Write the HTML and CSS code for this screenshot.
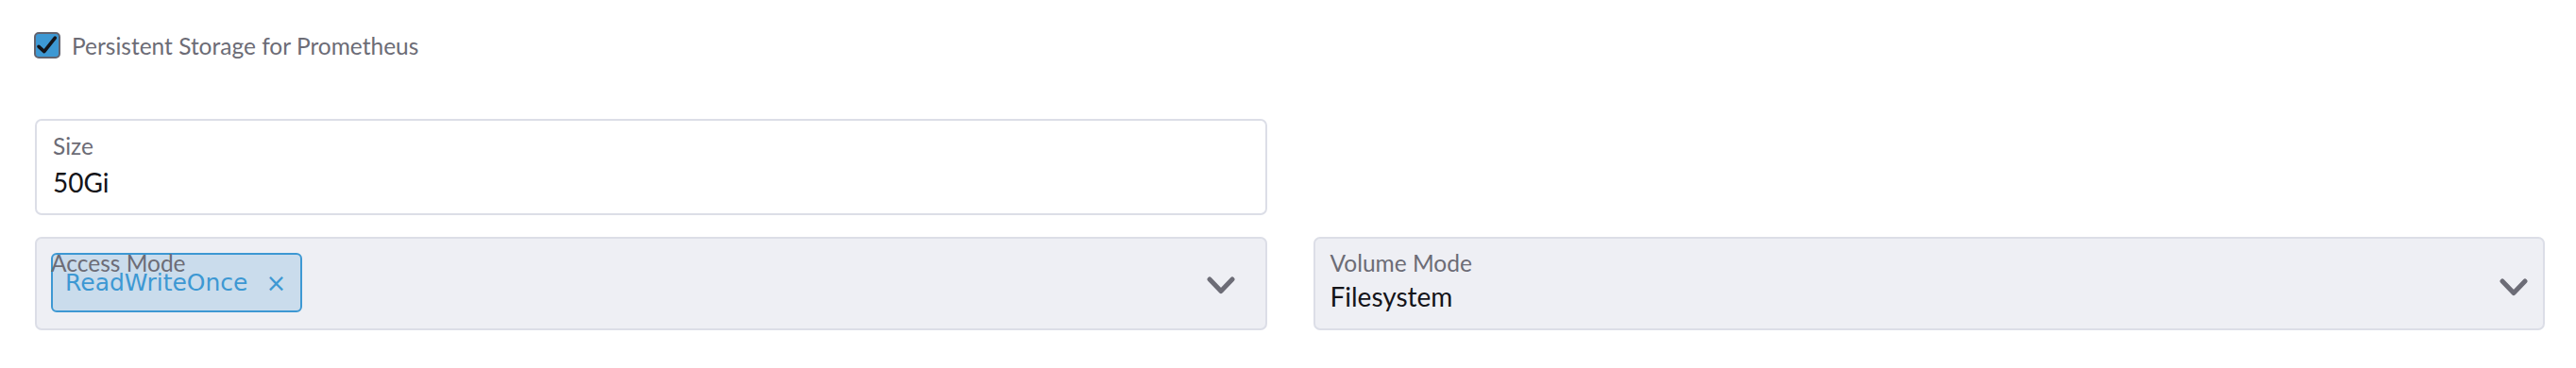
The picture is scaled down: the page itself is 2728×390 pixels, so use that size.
FILE: index.html
```html
<!DOCTYPE html>
<html lang="en">
<head>
<meta charset="utf-8">
<title>Persistent Storage</title>
<link rel="stylesheet" href="styles.css">
</head>
<body>
<div class="page">
  <label class="checkbox-row">
    <span class="checkbox">
      <svg class="check" viewBox="0 0 24 24" width="24" height="24"><polyline points="3,13.3 8.8,18.6 20.3,4.2" fill="none" stroke="#141419" stroke-width="3.6" stroke-linecap="round" stroke-linejoin="round"/></svg>
    </span>
    <span class="cb-label">Persistent Storage for Prometheus</span>
  </label>

  <div class="grid">
    <div class="field input">
      <div class="label">Size</div>
      <div class="value">50Gi</div>
    </div>
    <div class="empty"></div>

    <div class="field select access">
      <div class="select-body stack">
        <div class="label">Access Mode</div>
        <div class="tag-line">
          <span class="tag"><span class="tag-text">ReadWriteOnce</span><span class="tag-x">×</span></span>
        </div>
      </div>
      <svg class="chevron" viewBox="0 0 30 19" width="30" height="19"><polyline points="3,3 15,15.5 27,3" fill="none" stroke="#6c6c76" stroke-width="5" stroke-linecap="round" stroke-linejoin="round"/></svg>
    </div>

    <div class="field select volume">
      <div class="select-body">
        <div class="label">Volume Mode</div>
        <div class="value sel-value">Filesystem</div>
      </div>
      <svg class="chevron" viewBox="0 0 30 19" width="30" height="19"><polyline points="3,3 15,15.5 27,3" fill="none" stroke="#6c6c76" stroke-width="5" stroke-linecap="round" stroke-linejoin="round"/></svg>
    </div>
  </div>
</div>
</body>
</html>
```

FILE: styles.css
```css
* { box-sizing: border-box; }

html, body {
  margin: 0;
  padding: 0;
  background: #ffffff;
}

body {
  font-family: Lato, "Liberation Sans", sans-serif;
  color: #141419;
}

.page {
  padding: 34px 33px 0 37px;
}

.checkbox-row {
  display: flex;
  align-items: center;
  height: 28px;
  margin-left: -1px;
}

.checkbox {
  width: 28px;
  height: 28px;
  border: 2px solid #62636f;
  border-radius: 5px;
  background: #3d98d3;
  display: flex;
  align-items: center;
  justify-content: center;
  flex: none;
}

.check { display: block; }

.cb-label {
  margin-left: 12px;
  font-size: 24.5px;
  line-height: 29px;
  color: #6c6c76;
}

.grid {
  display: grid;
  grid-template-columns: 1fr 1fr;
  column-gap: 49px;
  row-gap: 23px;
  margin-top: 64px;
}

.field {
  border: 2px solid #dcdee7;
  border-radius: 7px;
}

.label {
  font-size: 24.5px;
  line-height: 29.4px;
  color: #6c6c76;
  white-space: nowrap;
}

.value {
  font-size: 28px;
  line-height: 33.6px;
  color: #141419;
}

.input {
  height: 102px;
  padding: 12px 17px 15px 17px;
  background: #ffffff;
}

.input .value {
  margin-top: 8px;
}

.select {
  height: 99px;
  background: #eeeff4;
  display: flex;
  align-items: center;
}

.select-body {
  flex: 1;
  align-self: stretch;
  padding-top: 11px;
}

.access .select-body {
  padding-left: 15px;
}

.volume .select-body {
  padding-left: 16px;
}

.sel-value {
  margin-top: 5px;
}

.stack {
  display: grid;
  grid-template-areas: "cell";
  align-content: start;
  justify-items: start;
}

.stack > * {
  grid-area: cell;
}

.stack .label {
  position: relative;
  z-index: 1;
}

.tag-line {
  margin-top: 4px;
}

.tag {
  display: inline-flex;
  align-items: center;
  height: 63px;
  padding: 0 15px 0 13px;
  border: 2px solid #3d98d3;
  border-radius: 6px;
  background: #cadcec;
  color: #3d98d3;
  font-family: "DejaVu Sans", sans-serif;
  font-size: 25px;
  line-height: 28px;
}

.tag-x {
  margin-left: 19px;
  font-size: 26px;
}

.chevron {
  flex: none;
  display: block;
  margin-top: 4px;
}

.access .chevron {
  margin-right: 32px;
}

.volume .chevron {
  margin-right: 16px;
  margin-top: 7px;
}
```
